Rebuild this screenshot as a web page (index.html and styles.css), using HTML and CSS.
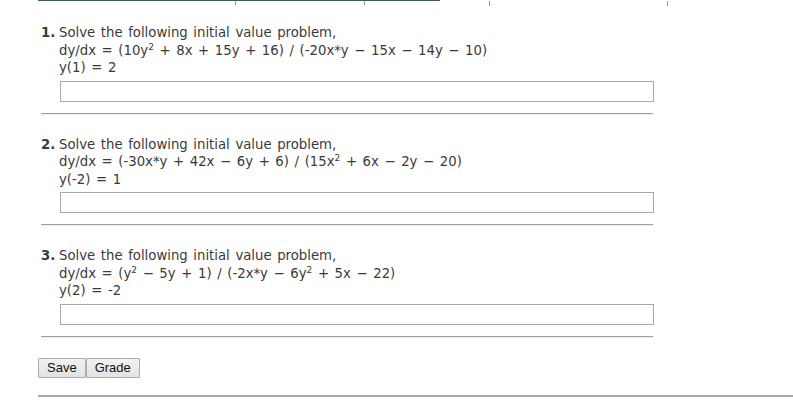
FILE: index.html
```html
<!DOCTYPE html>
<html>
<head>
<meta charset="utf-8">
<link rel="stylesheet" href="styles.css">
</head>
<body>
<div class="topbar">
  <span class="tick t1"></span>
  <span class="tick t2"></span>
  <span class="tick t3"></span>
  <span class="tick t4"></span>
</div>
<div class="quiz">
  <div class="question">
    <div class="qtext">
      <span class="num">1.</span>
      <div class="lines">
        <div>Solve the following initial value problem,</div>
        <div>dy/dx = (10y<sup>2</sup> + 8x + 15y + 16) / (-20x*y − 15x − 14y − 10)</div>
        <div>y(1) = 2</div>
        <input class="answer" type="text">
      </div>
    </div>
    <div class="sep"></div>
  </div>
  <div class="question">
    <div class="qtext">
      <span class="num">2.</span>
      <div class="lines">
        <div>Solve the following initial value problem,</div>
        <div>dy/dx = (-30x*y + 42x − 6y + 6) / (15x<sup>2</sup> + 6x − 2y − 20)</div>
        <div>y(-2) = 1</div>
        <input class="answer" type="text">
      </div>
    </div>
    <div class="sep"></div>
  </div>
  <div class="question">
    <div class="qtext">
      <span class="num">3.</span>
      <div class="lines">
        <div>Solve the following initial value problem,</div>
        <div>dy/dx = (y<sup>2</sup> − 5y + 1) / (-2x*y − 6y<sup>2</sup> + 5x − 22)</div>
        <div>y(2) = -2</div>
        <input class="answer" type="text">
      </div>
    </div>
    <div class="sep"></div>
  </div>
  <div class="buttons">
    <button class="btn">Save</button><button class="btn">Grade</button>
  </div>
</div>
<div class="bottomline"></div>
</body>
</html>
```
FILE: styles.css
```css
html, body {
  margin: 0;
  padding: 0;
  background: #ffffff;
}
body {
  font-family: "DejaVu Sans", Verdana, sans-serif;
  font-size: 13.25px;
  word-spacing: 1.4px;
  color: #3a3a3a;
  width: 793px;
  height: 408px;
  overflow: hidden;
}
.topbar {
  position: relative;
  margin-left: 38px;
  width: 402px;
  height: 6px;
  border-top: 1px solid #3d5a5e;
}
.tick {
  position: absolute;
  top: 0;
  width: 1px;
  height: 4px;
  background: #8a9a9c;
}
.t1 { left: 197px; }
.t2 { left: 326px; }
.t3 { left: 451px; height: 5px; }
.t4 { left: 629px; height: 5px; }
.quiz {
  padding-left: 41px;
  padding-top: 17px;
  width: 612px;
}
.question {
  margin-bottom: 21px;
}
.qtext {
  display: flex;
  line-height: 17.5px;
}
.num {
  font-weight: bold;
  width: 18px;
  flex: none;
}
.lines {
  flex: 1;
}
sup {
  font-size: 9px;
  line-height: 0;
  vertical-align: 5px;
}
.answer {
  display: block;
  box-sizing: border-box;
  width: 594px;
  height: 21px;
  margin: 4px 0 0 1px;
  border: 1px solid #a9a9a9;
  padding: 0;
  background: #fff;
}
.sep {
  margin-top: 11px;
  height: 0;
  border-top: 1px solid #a0a0a0;
  border-bottom: 1px solid #f0f0f0;
  width: 612px;
}
.buttons {
  display: flex;
  margin-left: -3px;
  margin-top: -1px;
}
.btn {
  font-family: "Liberation Sans", Arial, sans-serif;
  font-size: 13px;
  word-spacing: 0;
  color: #111;
  height: 20px;
  padding: 0 8px;
  border: 1px solid #adadad;
  border-radius: 1px;
  background: linear-gradient(#f2f2f2, #e2e2e2);
  margin: 0;
}
.bottomline {
  margin: 17px 0 0 38px;
  height: 0;
  border-top: 2px solid #a8a8a8;
}
```
